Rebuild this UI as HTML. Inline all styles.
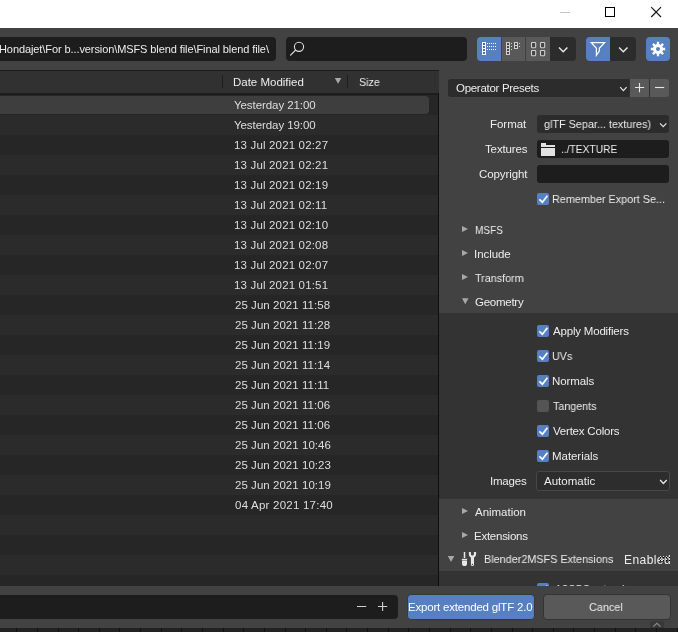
<!DOCTYPE html><html><head><meta charset="utf-8"><style>
html,body{margin:0;padding:0;width:678px;height:632px;overflow:hidden;background:#424242;}
body{position:relative;font-family:"Liberation Sans",sans-serif;font-size:11.5px;color:#ececec;}
.t{position:absolute;line-height:14px;white-space:pre;will-change:transform;}
.b{position:absolute;}
svg{position:absolute;overflow:visible;}
</style></head><body>
<div class="b" style="left:0px;top:0px;width:678px;height:28px;background:#ffffff;"></div>
<div class="b" style="left:560px;top:12px;width:10px;height:1px;background:#c4c4c4;"></div>
<svg style="left:0;top:0" width="678" height="632" ><rect x="605.5" y="7.5" width="9" height="9" stroke="#000" stroke-width="1" fill="none"/></svg>
<svg style="left:0;top:0" width="678" height="632" ><path d="M651.2 7.2L661 17M661 7.2L651.2 17" stroke="#111" stroke-width="1.15" fill="none"/></svg>
<div class="b" style="left:0px;top:28px;width:678px;height:42px;background:#424242;"></div>
<div class="b" style="left:-10px;top:37px;width:286px;height:24px;background:#1d1d1d;border-radius:4px;"></div>
<div class="t" style="left:-1.00px;top:42.36px;letter-spacing:-0.091px;font-size:11px;">Hondajet\For b...version\MSFS blend file\Final blend file\</div>
<div class="b" style="left:286px;top:37px;width:181px;height:24px;background:#1d1d1d;border-radius:4px;"></div>
<svg style="left:0;top:0" width="678" height="632" ><circle cx="299" cy="46.8" r="4.6" stroke="#e0e0e0" stroke-width="1.1" fill="none"/><path d="M295.6 50.2L290.6 55.2" stroke="#e0e0e0" stroke-width="1.2" stroke-linecap="round"/></svg>
<div class="b" style="left:477px;top:37px;width:24px;height:24px;background:#5680c2;border-radius:4px 0 0 4px;"></div>
<div class="b" style="left:502px;top:37px;width:23px;height:24px;background:#595959;"></div>
<div class="b" style="left:526px;top:37px;width:24px;height:24px;background:#595959;"></div>
<div class="b" style="left:550px;top:37px;width:26px;height:24px;background:#2c2c2c;border-radius:0 4px 4px 0;"></div>
<div class="b" style="left:586px;top:37px;width:24px;height:24px;background:#5680c2;border-radius:4px 0 0 4px;"></div>
<div class="b" style="left:610px;top:37px;width:26px;height:24px;background:#2c2c2c;border-radius:0 4px 4px 0;"></div>
<div class="b" style="left:646px;top:37px;width:24px;height:24px;background:#5680c2;border-radius:4px;"></div>
<svg style="left:0;top:0" width="678" height="632" ><rect x="482" y="42" width="4" height="13" fill="#ffffff"/><rect x="483" y="43" width="2" height="2" fill="#4570b0"/><rect x="483" y="46" width="2" height="2" fill="#4570b0"/><rect x="483" y="49" width="2" height="2" fill="#4570b0"/><rect x="483" y="52" width="2" height="2" fill="#4570b0"/><rect x="487" y="43" width="1" height="1" fill="#ffffff"/><rect x="487" y="46" width="1" height="1" fill="#ffffff"/><rect x="487" y="49" width="1" height="1" fill="#ffffff"/><rect x="489" y="43" width="1" height="1" fill="#ffffff"/><rect x="489" y="46" width="1" height="1" fill="#ffffff"/><rect x="489" y="49" width="1" height="1" fill="#ffffff"/><rect x="491" y="43" width="1" height="1" fill="#ffffff"/><rect x="491" y="46" width="1" height="1" fill="#ffffff"/><rect x="491" y="49" width="1" height="1" fill="#ffffff"/><rect x="493" y="43" width="1" height="1" fill="#ffffff"/><rect x="493" y="46" width="1" height="1" fill="#ffffff"/><rect x="493" y="49" width="1" height="1" fill="#ffffff"/><rect x="495" y="43" width="1" height="1" fill="#ffffff"/><rect x="495" y="46" width="1" height="1" fill="#ffffff"/><rect x="495" y="49" width="1" height="1" fill="#ffffff"/><rect x="506" y="42" width="4" height="13" fill="#d0d0d0"/><rect x="507" y="43" width="2" height="2" fill="#484848"/><rect x="507" y="46" width="2" height="2" fill="#484848"/><rect x="507" y="49" width="2" height="2" fill="#484848"/><rect x="507" y="52" width="2" height="2" fill="#484848"/><rect x="511" y="43" width="1" height="1" fill="#d2d2d2"/><rect x="511" y="46" width="1" height="1" fill="#d2d2d2"/><rect x="511" y="49" width="1" height="1" fill="#d2d2d2"/><rect x="514" y="42" width="4" height="7" fill="#d0d0d0"/><rect x="515" y="43" width="2" height="2" fill="#484848"/><rect x="515" y="46" width="2" height="2" fill="#484848"/><rect x="519" y="43" width="1" height="1" fill="#d2d2d2"/><rect x="519" y="46" width="1" height="1" fill="#d2d2d2"/><rect x="531.5" y="42.5" width="4.2" height="5.2" rx="0.6" stroke="#d0d0d0" stroke-width="1.1" fill="#454545"/><rect x="531.5" y="50.5" width="4.2" height="5.2" rx="0.6" stroke="#d0d0d0" stroke-width="1.1" fill="#454545"/><rect x="540.5" y="42.5" width="4.2" height="5.2" rx="0.6" stroke="#d0d0d0" stroke-width="1.1" fill="#454545"/><rect x="540.5" y="50.5" width="4.2" height="5.2" rx="0.6" stroke="#d0d0d0" stroke-width="1.1" fill="#454545"/><path d="M559 47.4L563.2 51.8L567.4 47.4" stroke="#e8e8e8" stroke-width="1.4" fill="none"/><path d="M619.1 47.4L623.3 51.8L627.5 47.4" stroke="#e8e8e8" stroke-width="1.4" fill="none"/><path d="M591.2 42.6H604.6L599.3 48.3V51.1L596.4 55.3V48.3Z" stroke="#ffffff" stroke-width="1.2" fill="none"/><path d="M656.85 44.03L656.80 41.80L659.20 41.80L659.15 44.03L660.70 44.67L662.24 43.06L663.94 44.76L662.33 46.30L662.97 47.85L665.20 47.80L665.20 50.20L662.97 50.15L662.33 51.70L663.94 53.24L662.24 54.94L660.70 53.33L659.15 53.97L659.20 56.20L656.80 56.20L656.85 53.97L655.30 53.33L653.76 54.94L652.06 53.24L653.67 51.70L653.03 50.15L650.80 50.20L650.80 47.80L653.03 47.85L653.67 46.30L652.06 44.76L653.76 43.06L655.30 44.67ZM660 49A2 2 0 1 0 656 49A2 2 0 1 0 660 49Z" fill="#ffffff" fill-rule="evenodd"/></svg>
<div class="b" style="left:0px;top:70px;width:439px;height:1px;background:#1d1d1d;"></div>
<div class="b" style="left:0px;top:71px;width:439px;height:22px;background:#313131;"></div>
<div class="b" style="left:0px;top:93px;width:439px;height:2px;background:#1d1d1d;"></div>
<div class="b" style="left:222px;top:75px;width:1px;height:13px;background:#1e1e1e;"></div>
<div class="b" style="left:347px;top:75px;width:1px;height:13px;background:#1e1e1e;"></div>
<div class="t" style="left:233.30px;top:75.20px;letter-spacing:-0.008px;">Date Modified</div>
<div class="t" style="left:358.77px;top:75.20px;transform:scaleX(0.9286);transform-origin:0 0;">Size</div>
<svg style="left:0;top:0" width="678" height="632" ><path d="M334.8 78.1L341.3 78.1L338.05 83.8Z" fill="#a8a8a8"/></svg>
<div class="b" style="left:0px;top:95px;width:438px;height:20px;background:#262626;"></div>
<div class="b" style="left:0px;top:115px;width:438px;height:20px;background:#2b2b2b;"></div>
<div class="b" style="left:0px;top:135px;width:438px;height:20px;background:#262626;"></div>
<div class="b" style="left:0px;top:155px;width:438px;height:20px;background:#2b2b2b;"></div>
<div class="b" style="left:0px;top:175px;width:438px;height:20px;background:#262626;"></div>
<div class="b" style="left:0px;top:195px;width:438px;height:20px;background:#2b2b2b;"></div>
<div class="b" style="left:0px;top:215px;width:438px;height:20px;background:#262626;"></div>
<div class="b" style="left:0px;top:235px;width:438px;height:20px;background:#2b2b2b;"></div>
<div class="b" style="left:0px;top:255px;width:438px;height:20px;background:#262626;"></div>
<div class="b" style="left:0px;top:275px;width:438px;height:20px;background:#2b2b2b;"></div>
<div class="b" style="left:0px;top:295px;width:438px;height:20px;background:#262626;"></div>
<div class="b" style="left:0px;top:315px;width:438px;height:20px;background:#2b2b2b;"></div>
<div class="b" style="left:0px;top:335px;width:438px;height:20px;background:#262626;"></div>
<div class="b" style="left:0px;top:355px;width:438px;height:20px;background:#2b2b2b;"></div>
<div class="b" style="left:0px;top:375px;width:438px;height:20px;background:#262626;"></div>
<div class="b" style="left:0px;top:395px;width:438px;height:20px;background:#2b2b2b;"></div>
<div class="b" style="left:0px;top:415px;width:438px;height:20px;background:#262626;"></div>
<div class="b" style="left:0px;top:435px;width:438px;height:20px;background:#2b2b2b;"></div>
<div class="b" style="left:0px;top:455px;width:438px;height:20px;background:#262626;"></div>
<div class="b" style="left:0px;top:475px;width:438px;height:20px;background:#2b2b2b;"></div>
<div class="b" style="left:0px;top:495px;width:438px;height:20px;background:#262626;"></div>
<div class="b" style="left:0px;top:515px;width:438px;height:20px;background:#2b2b2b;"></div>
<div class="b" style="left:0px;top:535px;width:438px;height:20px;background:#262626;"></div>
<div class="b" style="left:0px;top:555px;width:438px;height:20px;background:#2b2b2b;"></div>
<div class="b" style="left:0px;top:575px;width:438px;height:20px;background:#262626;"></div>
<div class="b" style="left:-10px;top:96px;width:438.5px;height:18px;background:#3e3e3e;border-radius:4px;"></div>
<div class="t" style="left:234.30px;top:98.20px;letter-spacing:-0.071px;color:#dedede;">Yesterday 21:00</div>
<div class="t" style="left:234.30px;top:118.20px;letter-spacing:-0.071px;color:#dedede;">Yesterday 19:00</div>
<div class="t" style="left:233.70px;top:138.20px;letter-spacing:0.163px;color:#dedede;">13 Jul 2021 02:27</div>
<div class="t" style="left:233.70px;top:158.20px;letter-spacing:0.163px;color:#dedede;">13 Jul 2021 02:21</div>
<div class="t" style="left:233.70px;top:178.20px;letter-spacing:0.163px;color:#dedede;">13 Jul 2021 02:19</div>
<div class="t" style="left:233.70px;top:198.20px;letter-spacing:0.163px;color:#dedede;">13 Jul 2021 02:11</div>
<div class="t" style="left:233.70px;top:218.20px;letter-spacing:0.163px;color:#dedede;">13 Jul 2021 02:10</div>
<div class="t" style="left:233.70px;top:238.20px;letter-spacing:0.163px;color:#dedede;">13 Jul 2021 02:08</div>
<div class="t" style="left:233.70px;top:258.20px;letter-spacing:0.163px;color:#dedede;">13 Jul 2021 02:07</div>
<div class="t" style="left:233.70px;top:278.20px;letter-spacing:0.163px;color:#dedede;">13 Jul 2021 01:51</div>
<div class="t" style="left:234.70px;top:298.20px;letter-spacing:0.038px;color:#dedede;">25 Jun 2021 11:58</div>
<div class="t" style="left:234.70px;top:318.20px;letter-spacing:0.038px;color:#dedede;">25 Jun 2021 11:28</div>
<div class="t" style="left:234.70px;top:338.20px;letter-spacing:0.038px;color:#dedede;">25 Jun 2021 11:19</div>
<div class="t" style="left:234.70px;top:358.20px;letter-spacing:0.038px;color:#dedede;">25 Jun 2021 11:14</div>
<div class="t" style="left:234.70px;top:378.20px;letter-spacing:0.038px;color:#dedede;">25 Jun 2021 11:11</div>
<div class="t" style="left:234.70px;top:398.20px;letter-spacing:0.038px;color:#dedede;">25 Jun 2021 11:06</div>
<div class="t" style="left:234.70px;top:418.20px;letter-spacing:0.038px;color:#dedede;">25 Jun 2021 11:06</div>
<div class="t" style="left:234.70px;top:438.20px;letter-spacing:0.038px;color:#dedede;">25 Jun 2021 10:46</div>
<div class="t" style="left:234.70px;top:458.20px;letter-spacing:0.038px;color:#dedede;">25 Jun 2021 10:23</div>
<div class="t" style="left:234.70px;top:478.20px;letter-spacing:0.038px;color:#dedede;">25 Jun 2021 10:19</div>
<div class="t" style="left:234.70px;top:498.20px;letter-spacing:0.231px;color:#dedede;">04 Apr 2021 17:40</div>
<div class="b" style="left:438px;top:93px;width:1px;height:493px;background:#0e0e0e;"></div>
<div class="b" style="left:439px;top:70px;width:239px;height:516px;background:#424242;"></div>
<div class="b" style="left:448px;top:79px;width:181px;height:18px;background:#2c2c2c;border-radius:3px 0 0 3px;"></div>
<div class="t" style="left:455.60px;top:81.20px;letter-spacing:-0.293px;">Operator Presets</div>
<div class="b" style="left:629px;top:79px;width:20px;height:18px;background:#595959;border-left:1px solid #303030;box-sizing:border-box;"></div>
<div class="b" style="left:649px;top:79px;width:20px;height:18px;background:#595959;border-left:1px solid #303030;border-radius:0 3px 3px 0;box-sizing:border-box;"></div>
<svg style="left:0;top:0" width="678" height="632" fill="none" stroke="#e6e6e6"><path d="M620.2 87.2L623.4 90.6L626.6 87.2" stroke-width="1.2"/><path d="M635 87.5H644.2M639.5 83V92.2" stroke-width="1.1"/><path d="M655 87.5H664.2" stroke-width="1.1"/></svg>
<div class="t" style="left:490.30px;top:117.20px;letter-spacing:-0.040px;">Format</div>
<div class="b" style="left:537px;top:115px;width:132px;height:18px;background:#2c2c2c;border-radius:3px;"></div>
<div class="t" style="left:544.20px;top:117.20px;transform:scaleX(0.9407);transform-origin:0 0;">glTF Separ... textures)</div>
<svg style="left:0;top:0" width="678" height="632" fill="none" stroke="#e6e6e6"><path d="M660 123.3L663.2 126.7L666.4 123.3" stroke-width="1.2"/></svg>
<div class="t" style="left:485.30px;top:142.20px;letter-spacing:-0.129px;">Textures</div>
<div class="b" style="left:537px;top:140px;width:132px;height:18px;background:#1d1d1d;border-radius:3px;"></div>
<div class="b" style="left:541px;top:143px;width:5px;height:2px;background:#e2e2e2;"></div>
<div class="b" style="left:541px;top:145px;width:14px;height:2px;background:#e2e2e2;"></div>
<div class="b" style="left:541px;top:148px;width:14px;height:8px;background:#e2e2e2;"></div>
<div class="t" style="left:561.11px;top:142.20px;transform:scaleX(0.8903);transform-origin:0 0;">../TEXTURE</div>
<div class="t" style="left:479.20px;top:167.20px;letter-spacing:-0.100px;">Copyright</div>
<div class="b" style="left:537px;top:165px;width:132px;height:18px;background:#1d1d1d;border-radius:3px;"></div>
<div class="b" style="left:537px;top:193px;width:12px;height:12px;background:#5680c2;border-radius:2px;"></div>
<svg style="left:0;top:0" width="678" height="632" ><path d="M539.4 199.4L542.4 202.2L547.4 195.8" stroke="#fff" stroke-width="1.7" fill="none"/></svg>
<div class="t" style="left:552.06px;top:192.20px;transform:scaleX(0.9407);transform-origin:0 0;">Remember Export Se...</div>
<svg style="left:0;top:0" width="678" height="632" ><path d="M462 226L468 229L462 232Z" fill="#a8a8a8"/></svg>
<div class="t" style="left:474.53px;top:223.20px;transform:scaleX(0.8742);transform-origin:0 0;">MSFS</div>
<svg style="left:0;top:0" width="678" height="632" ><path d="M462 250L468 253L462 256Z" fill="#a8a8a8"/></svg>
<div class="t" style="left:474.40px;top:247.20px;letter-spacing:-0.067px;">Include</div>
<svg style="left:0;top:0" width="678" height="632" ><path d="M462 274L468 277L462 280Z" fill="#a8a8a8"/></svg>
<div class="t" style="left:475.40px;top:271.20px;transform:scaleX(0.9346);transform-origin:0 0;">Transform</div>
<svg style="left:0;top:0" width="678" height="632" ><path d="M462 298.2L468.5 298.2L465.25 304.2Z" fill="#a8a8a8"/></svg>
<div class="t" style="left:475.40px;top:295.20px;letter-spacing:-0.257px;">Geometry</div>
<div class="b" style="left:439px;top:313px;width:239px;height:186px;background:#333333;"></div>
<div class="b" style="left:537px;top:325px;width:12px;height:12px;background:#5680c2;border-radius:2px;"></div>
<svg style="left:0;top:0" width="678" height="632" ><path d="M539.4 331.4L542.4 334.2L547.4 327.8" stroke="#fff" stroke-width="1.7" fill="none"/></svg>
<div class="t" style="left:552.70px;top:324.20px;letter-spacing:-0.193px;">Apply Modifiers</div>
<div class="b" style="left:537px;top:350px;width:12px;height:12px;background:#5680c2;border-radius:2px;"></div>
<svg style="left:0;top:0" width="678" height="632" ><path d="M539.4 356.4L542.4 359.2L547.4 352.8" stroke="#fff" stroke-width="1.7" fill="none"/></svg>
<div class="t" style="left:551.77px;top:349.20px;transform:scaleX(0.9333);transform-origin:0 0;">UVs</div>
<div class="b" style="left:537px;top:375px;width:12px;height:12px;background:#5680c2;border-radius:2px;"></div>
<svg style="left:0;top:0" width="678" height="632" ><path d="M539.4 381.4L542.4 384.2L547.4 377.8" stroke="#fff" stroke-width="1.7" fill="none"/></svg>
<div class="t" style="left:551.70px;top:374.20px;letter-spacing:-0.100px;">Normals</div>
<div class="b" style="left:537px;top:400px;width:12px;height:12px;background:#545454;border-radius:2px;"></div>
<div class="t" style="left:552.70px;top:399.20px;transform:scaleX(0.9298);transform-origin:0 0;">Tangents</div>
<div class="b" style="left:537px;top:425px;width:12px;height:12px;background:#5680c2;border-radius:2px;"></div>
<svg style="left:0;top:0" width="678" height="632" ><path d="M539.4 431.4L542.4 434.2L547.4 427.8" stroke="#fff" stroke-width="1.7" fill="none"/></svg>
<div class="t" style="left:552.70px;top:424.20px;letter-spacing:-0.208px;">Vertex Colors</div>
<div class="b" style="left:537px;top:450px;width:12px;height:12px;background:#5680c2;border-radius:2px;"></div>
<svg style="left:0;top:0" width="678" height="632" ><path d="M539.4 456.4L542.4 459.2L547.4 452.8" stroke="#fff" stroke-width="1.7" fill="none"/></svg>
<div class="t" style="left:551.70px;top:449.20px;letter-spacing:-0.050px;">Materials</div>
<div class="t" style="left:490.10px;top:474.20px;letter-spacing:-0.200px;">Images</div>
<div class="b" style="left:536px;top:471px;width:134px;height:20px;background:#2d2d2d;border:1px solid #474747;border-radius:3px;box-sizing:border-box;"></div>
<div class="t" style="left:544.40px;top:474.20px;letter-spacing:0.025px;">Automatic</div>
<svg style="left:0;top:0" width="678" height="632" fill="none" stroke="#e6e6e6"><path d="M660.1 480.1L663.4 483.5L666.7 480.1" stroke-width="1.4"/></svg>
<svg style="left:0;top:0" width="678" height="632" ><path d="M462 508L468 511L462 514Z" fill="#a8a8a8"/></svg>
<div class="t" style="left:475.40px;top:505.20px;letter-spacing:-0.025px;">Animation</div>
<svg style="left:0;top:0" width="678" height="632" ><path d="M462 532L468 535L462 538Z" fill="#a8a8a8"/></svg>
<div class="t" style="left:474.40px;top:529.20px;letter-spacing:-0.256px;">Extensions</div>
<svg style="left:0;top:0" width="678" height="632" ><path d="M447.8 555.9L454.3 555.9L451.05 561.9Z" fill="#a8a8a8"/></svg>
<svg style="left:0;top:0" width="678" height="632" fill="#e8e8e8"><rect x="463.75" y="552" width="1.5" height="6"/><rect x="461.8" y="558.8" width="5.3" height="1.3"/><path d="M462 560.6H467V563.4Q467 566.1 464.5 566.1Q462 566.1 462 563.4Z"/><path d="M468.9 552L470.9 552V554A1.5 1.5 0 0 0 473.9 554V552L476.1 552Q476.6 556.4 474 557.6V565Q474 566 472.45 566Q470.9 566 470.9 565V557.6Q468.3 556.4 468.9 552Z"/><circle cx="472.45" cy="564.4" r="0.7" fill="#424242"/></svg>
<div class="t" style="left:484.26px;top:552.20px;transform:scaleX(0.9412);transform-origin:0 0;">Blender2MSFS Extensions</div>
<div class="t" style="left:623.50px;top:553.03px;letter-spacing:0.433px;font-size:12px;">Enabled</div>
<svg style="left:0;top:0" width="678" height="632" ><rect x="660" y="556" width="1" height="1" fill="#d8d8d8"/><rect x="660" y="557" width="1" height="1" fill="#000"/><rect x="660" y="559" width="1" height="1" fill="#d8d8d8"/><rect x="660" y="560" width="1" height="1" fill="#000"/><rect x="663" y="556" width="1" height="1" fill="#d8d8d8"/><rect x="663" y="557" width="1" height="1" fill="#000"/><rect x="663" y="559" width="1" height="1" fill="#d8d8d8"/><rect x="663" y="560" width="1" height="1" fill="#000"/><rect x="666" y="556" width="1" height="1" fill="#d8d8d8"/><rect x="666" y="557" width="1" height="1" fill="#000"/><rect x="666" y="559" width="1" height="1" fill="#d8d8d8"/><rect x="666" y="560" width="1" height="1" fill="#000"/><rect x="669" y="556" width="1" height="1" fill="#d8d8d8"/><rect x="669" y="557" width="1" height="1" fill="#000"/><rect x="669" y="559" width="1" height="1" fill="#d8d8d8"/><rect x="669" y="560" width="1" height="1" fill="#000"/></svg>
<div class="b" style="left:439px;top:571px;width:239px;height:15px;background:#333333;"></div>
<div class="b" style="left:537px;top:583px;width:12px;height:12px;background:#5680c2;border-radius:2px;"></div>
<svg style="left:0;top:0" width="678" height="632" ><path d="M539.4 589.4L542.4 592.2L547.4 585.8" stroke="#fff" stroke-width="1.7" fill="none"/></svg>
<div class="t" style="left:554.50px;top:581.70px;transform:scaleX(0.8636);transform-origin:0 0;">ASOBO extensions</div>
<div class="b" style="left:0px;top:586px;width:678px;height:42px;background:#424242;"></div>
<div class="b" style="left:-10px;top:595px;width:408px;height:24px;background:#1d1d1d;border-radius:4px;"></div>
<svg style="left:0;top:0" width="678" height="632" fill="none" stroke="#cfcfcf"><path d="M357 606.5H366.2M378 606.5H387.2M382.6 602V611" stroke-width="1.1"/></svg>
<div class="b" style="left:407px;top:594px;width:128px;height:26px;background:#5680c2;border:1px solid #383838;border-radius:4px;box-sizing:border-box;"></div>
<div class="t" style="left:407.70px;top:600.20px;letter-spacing:-0.196px;color:#ffffff;">Export extended glTF 2.0</div>
<div class="b" style="left:543px;top:594px;width:128px;height:26px;background:#595959;border:1px solid #333;border-radius:4px;box-sizing:border-box;"></div>
<div class="t" style="left:589.40px;top:600.20px;transform:scaleX(0.9457);transform-origin:0 0;">Cancel</div>
<div class="b" style="left:0px;top:628px;width:678px;height:4px;background:#222222;"></div>
<div class="b" style="left:16px;top:628px;width:1px;height:4px;background:#121212;"></div>
<div class="b" style="left:37px;top:628px;width:1px;height:4px;background:#121212;"></div>
<div class="b" style="left:58px;top:628px;width:1px;height:4px;background:#121212;"></div>
<div class="b" style="left:78px;top:628px;width:1px;height:4px;background:#121212;"></div>
<div class="b" style="left:99px;top:628px;width:1px;height:4px;background:#121212;"></div>
<div class="b" style="left:119px;top:628px;width:1px;height:4px;background:#121212;"></div>
<div class="b" style="left:140px;top:628px;width:1px;height:4px;background:#121212;"></div>
<div class="b" style="left:161px;top:628px;width:1px;height:4px;background:#121212;"></div>
<div class="b" style="left:181px;top:628px;width:1px;height:4px;background:#121212;"></div>
<div class="b" style="left:202px;top:628px;width:1px;height:4px;background:#121212;"></div>
<div class="b" style="left:223px;top:628px;width:1px;height:4px;background:#121212;"></div>
<div class="b" style="left:243px;top:628px;width:1px;height:4px;background:#121212;"></div>
<div class="b" style="left:264px;top:628px;width:1px;height:4px;background:#121212;"></div>
<div class="b" style="left:285px;top:628px;width:1px;height:4px;background:#121212;"></div>
<div class="b" style="left:305px;top:628px;width:1px;height:4px;background:#121212;"></div>
<div class="b" style="left:326px;top:628px;width:1px;height:4px;background:#121212;"></div>
<div class="b" style="left:346px;top:628px;width:1px;height:4px;background:#121212;"></div>
<div class="b" style="left:367px;top:628px;width:1px;height:4px;background:#121212;"></div>
<div class="b" style="left:388px;top:628px;width:1px;height:4px;background:#121212;"></div>
<div class="b" style="left:408px;top:628px;width:1px;height:4px;background:#121212;"></div>
<div class="b" style="left:429px;top:628px;width:1px;height:4px;background:#121212;"></div>
<div class="b" style="left:450px;top:628px;width:1px;height:4px;background:#121212;"></div>
<div class="b" style="left:470px;top:628px;width:1px;height:4px;background:#121212;"></div>
<div class="b" style="left:491px;top:628px;width:1px;height:4px;background:#121212;"></div>
<div class="b" style="left:512px;top:628px;width:1px;height:4px;background:#121212;"></div>
<div class="b" style="left:532px;top:628px;width:1px;height:4px;background:#121212;"></div>
<div class="b" style="left:553px;top:628px;width:1px;height:4px;background:#121212;"></div>
<div class="b" style="left:573px;top:628px;width:1px;height:4px;background:#121212;"></div>
<div class="b" style="left:594px;top:628px;width:1px;height:4px;background:#121212;"></div>
<div class="b" style="left:615px;top:628px;width:1px;height:4px;background:#121212;"></div>
<div class="b" style="left:635px;top:628px;width:1px;height:4px;background:#121212;"></div>
<div class="b" style="left:656px;top:628px;width:1px;height:4px;background:#121212;"></div>
<div class="b" style="left:677px;top:628px;width:1px;height:4px;background:#121212;"></div>
<div class="b" style="left:650px;top:621px;width:14px;height:7px;background:#383838;border-radius:3px 3px 0 0;"></div>
<svg style="left:0;top:0" width="678" height="632" ><path d="M653.2 626.7L656.9 623.3L660.6 626.7" stroke="#8c8c8c" stroke-width="1.1" fill="none"/></svg>
</body></html>
